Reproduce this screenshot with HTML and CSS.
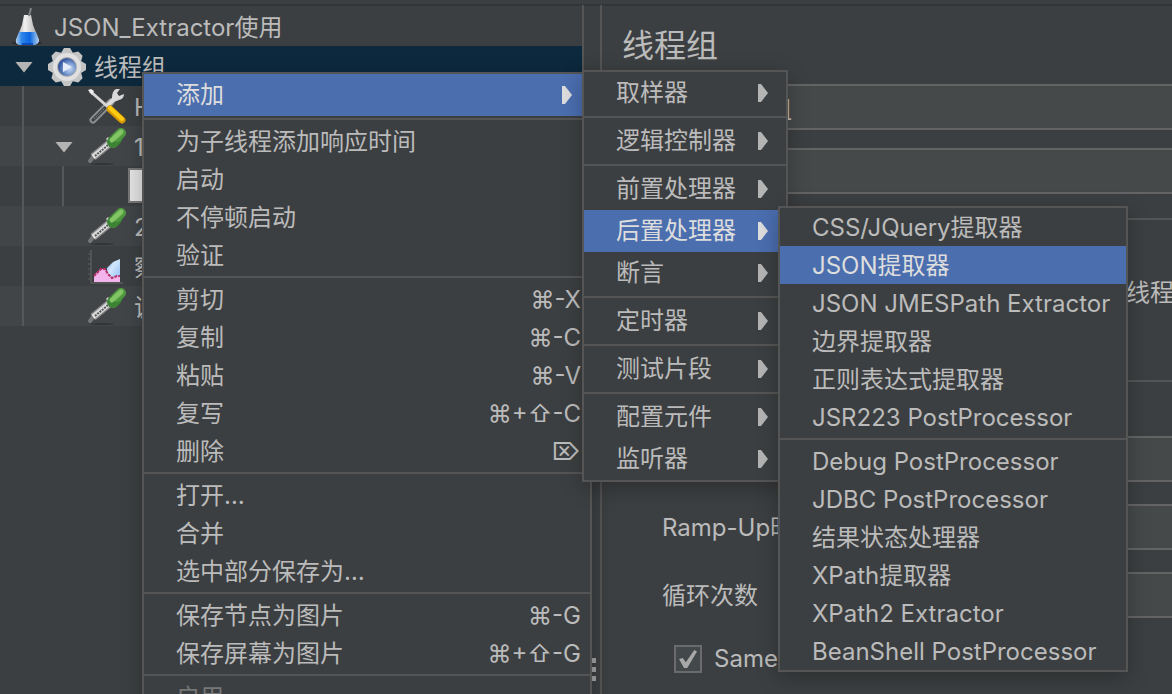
FILE: index.html
```html
<!DOCTYPE html>
<html lang="zh-CN">
<head>
  <meta charset="UTF-8">
  <title>JSON_Extractor使用</title>
  <link rel="stylesheet" href="styles.css">
</head>
<body>

  <svg class="defs" aria-hidden="true">
    <defs>
      <linearGradient id="glass" x1="0" x2="1">
        <stop offset="0" stop-color="#a4a4a4"/>
        <stop offset="0.4" stop-color="#f2f2f2"/>
        <stop offset="1" stop-color="#a0a0a0"/>
      </linearGradient>
      <linearGradient id="liquid" x1="0" x2="1">
        <stop offset="0" stop-color="#b4d2ee"/>
        <stop offset="0.25" stop-color="#2f86ea"/>
        <stop offset="0.6" stop-color="#0a66e0"/>
        <stop offset="1" stop-color="#b4d2ee"/>
      </linearGradient>
      <radialGradient id="hub" cx="0.65" cy="0.6" r="0.6">
        <stop offset="0" stop-color="#c4d6f0"/>
        <stop offset="0.5" stop-color="#7f9fd4"/>
        <stop offset="1" stop-color="#34569c"/>
      </radialGradient>
      <linearGradient id="peak" x1="0" y1="0" x2="1" y2="1">
        <stop offset="0" stop-color="#6fa6ea"/>
        <stop offset="0.4" stop-color="#d4e7fc"/>
        <stop offset="1" stop-color="#8fbdf5"/>
      </linearGradient>
      <symbol id="dropper" viewBox="0 0 40 40">
        <ellipse cx="15" cy="38" rx="12" ry="1" fill="#323537"/>
        <path d="M3 35 L6 31" stroke="#777" stroke-width="4" stroke-linecap="round"/>
        <path d="M6 31 L23 17" stroke="#8c8c8c" stroke-width="8"/>
        <path d="M6 31 L23 17" stroke="#dcdcdc" stroke-width="5"/>
        <path d="M8 30 L21 19" stroke="#55585a" stroke-width="2" stroke-dasharray="2 1"/>
        <path d="M20 12 L28 21" stroke="#c8c8c8" stroke-width="3"/>
        <path d="M26 16 L29 13" stroke="#3c8434" stroke-width="12" stroke-linecap="round"/>
        <path d="M30 11 L34 7" stroke="#4f9a40" stroke-width="10" stroke-linecap="round"/>
        <path d="M25 14 L34 6" stroke="#83c565" stroke-width="5" stroke-linecap="round"/>
      </symbol>
    </defs>
  </svg>

  <div class="app">
    <div class="tree">
      <div class="row">
        <svg class="icon" viewBox="0 0 40 40">
          <ellipse cx="20" cy="37" rx="15" ry="2" fill="#2a2c2e"/>
          <path d="M17 9 L24 9 L26 19 L32 34 Q32 38 27 39 L13 39 Q8 38 9 34 L15 19 Z" fill="url(#glass)"/>
          <path d="M12 26 L29 26 L32 34 Q32 38 27 39 L13 39 Q8 38 9 34 Z" fill="url(#liquid)"/>
          <path d="M15 38 H26" stroke="#0a4ec0" stroke-width="2"/>
          <path d="M22 10 L24 2" stroke="#808080" stroke-width="2"/>
        </svg>
        <span>JSON_Extractor使用</span>
      </div>
      <div class="row selected">
        <span class="toggle open"></span>
        <svg class="icon" viewBox="0 0 40 40">
          <g transform="translate(20 21)">
            <g fill="#c4c4c4">
              <path d="M-6 -14 L-3 -19 H3 L6 -14 V14 L3 19 H-3 L-6 14 Z"/>
              <path d="M-6 -14 L-3 -19 H3 L6 -14 V14 L3 19 H-3 L-6 14 Z" transform="rotate(45)"/>
              <path d="M-6 -14 L-3 -19 H3 L6 -14 V14 L3 19 H-3 L-6 14 Z" transform="rotate(90)"/>
              <path d="M-6 -14 L-3 -19 H3 L6 -14 V14 L3 19 H-3 L-6 14 Z" transform="rotate(135)"/>
            </g>
            <circle r="14" fill="#e0e0e0"/>
            <circle r="10" fill="#a9abb0"/>
            <circle r="9" fill="url(#hub)"/>
            <path d="M-4 -5 L5 0 L-4 5 Z" fill="#e6edf8"/>
          </g>
        </svg>
        <span>线程组</span>
      </div>
      <div class="row level-2">
        <span class="toggle"></span>
        <svg class="icon" viewBox="0 0 40 40">
          <path d="M6 34 L24 16" stroke="#8a8c8d" stroke-width="7" stroke-linecap="round"/>
          <path d="M6 34 L19 21" stroke="#3c3f41" stroke-width="3" stroke-linecap="round"/>
          <path d="M7 33 L18 22" stroke="#85878a" stroke-width="1" stroke-dasharray="2 1"/>
          <path d="M25 12 Q25 5 29 3 L33 3 L30 7 L32 10 L37 8 Q37 13 32 14 L27 16 Z" fill="#d8d8d8"/>
          <path d="M20 20 L28 12" stroke="#dcdcdc" stroke-width="4"/>
          <path d="M3 5 L21 21" stroke="#d6d6d6" stroke-width="3"/>
          <path d="M1 4 L4 3 L7 5 L5 9 Z" fill="#eee"/>
          <path d="M23 23 L35 34" stroke="#d89c00" stroke-width="7" stroke-linecap="round"/>
          <path d="M23 22 L35 33" stroke="#ffcc14" stroke-width="4" stroke-linecap="round"/>
        </svg>
        <span>HTTP信息头管理器</span>
      </div>
      <div class="row level-2 striped">
        <span class="toggle open"></span>
        <svg class="icon"><use href="#dropper"/></svg>
        <span>1.登录</span>
      </div>
      <div class="row level-3">
        <span class="toggle"></span>
        <svg class="icon" viewBox="0 0 40 40">
          <path d="M2 3 H34 V36 H2 Z" fill="#e4e4e4" stroke="#777" stroke-width="2"/>
        </svg>
      </div>
      <div class="row level-2 striped">
        <span class="toggle"></span>
        <svg class="icon"><use href="#dropper"/></svg>
        <span>2.查询</span>
      </div>
      <div class="row level-2">
        <span class="toggle"></span>
        <svg class="icon" viewBox="0 0 40 40">
          <path d="M4 4 V37 H36" fill="none" stroke="#66686a" stroke-width="1"/>
          <path d="M1 8 h3 M1 13 h3 M1 18 h3 M1 23 h3 M1 28 h3 M1 33 h3" stroke="#5a5c5e" stroke-width="1"/>
          <path d="M20 28 V22 L26 16 L33 13 V31 L26 33 Z" fill="url(#peak)"/>
          <path d="M7 36 V29 L14 23 H18 L21 28 L25 32 L30 30 L33 31 V36 Z" fill="#f2b4ea"/>
          <path d="M7 30 L14 23 H18 L21 28 L25 32 L30 30 L33 30" fill="none" stroke="#b8306c" stroke-width="2" stroke-dasharray="3 1"/>
        </svg>
        <span>察看结果树</span>
      </div>
      <div class="row level-2 striped">
        <span class="toggle"></span>
        <svg class="icon"><use href="#dropper"/></svg>
        <span>调试取样器</span>
      </div>
    </div>

    <div class="splitter"><i></i><i></i><i></i></div>

    <div class="editor">
      <h1>线程组</h1>
      <div class="line">
        <label for="name">名称：</label>
        <input type="text" id="name" value="线程组">
      </div>
      <div class="line">
        <label for="comment">注释：</label>
        <input type="text" id="comment">
      </div>

      <div class="group actions">
        <label><input type="radio" name="action" checked>继续</label>
        <label><input type="radio" name="action">启动下一进程循环</label>
        <label><input type="radio" name="action">线程</label>
      </div>

      <div class="group props">
        <div class="line">
          <label for="threads">线程数：</label>
          <input type="text" id="threads">
        </div>
        <div class="line">
          <label for="rampup">Ramp-Up时间（秒）：</label>
          <input type="text" id="rampup">
        </div>
        <div class="line">
          <label for="loops">循环次数</label>
          <input type="text" id="loops">
        </div>
        <label class="check"><input type="checkbox" checked>Same user on each iteration</label>
      </div>
    </div>
  </div>

  <div class="menu context-menu">
    <button class="has-sub active">添加</button>
    <hr>
    <button>为子线程添加响应时间</button>
    <button>启动</button>
    <button>不停顿启动</button>
    <button>验证</button>
    <hr>
    <button>剪切<kbd>⌘-X</kbd></button>
    <button>复制<kbd>⌘-C</kbd></button>
    <button>粘贴<kbd>⌘-V</kbd></button>
    <button>复写<kbd>⌘+⇧-C</kbd></button>
    <button>删除<kbd>⌦</kbd></button>
    <hr>
    <button>打开…</button>
    <button>合并</button>
    <button>选中部分保存为…</button>
    <hr>
    <button>保存节点为图片<kbd>⌘-G</kbd></button>
    <button>保存屏幕为图片<kbd>⌘+⇧-G</kbd></button>
    <hr>
    <button disabled>启用</button>
  </div>

  <div class="menu add-menu">
    <button class="has-sub">取样器</button>
    <hr>
    <button class="has-sub">逻辑控制器</button>
    <hr>
    <button class="has-sub">前置处理器</button>
    <button class="has-sub active">后置处理器</button>
    <button class="has-sub">断言</button>
    <hr>
    <button class="has-sub">定时器</button>
    <hr>
    <button class="has-sub">测试片段</button>
    <hr>
    <button class="has-sub">配置元件</button>
    <button class="has-sub">监听器</button>
  </div>

  <div class="menu post-menu">
    <button>CSS/JQuery提取器</button>
    <button class="active">JSON提取器</button>
    <button>JSON JMESPath Extractor</button>
    <button>边界提取器</button>
    <button>正则表达式提取器</button>
    <button>JSR223 PostProcessor</button>
    <hr>
    <button>Debug PostProcessor</button>
    <button>JDBC PostProcessor</button>
    <button>结果状态处理器</button>
    <button>XPath提取器</button>
    <button>XPath2 Extractor</button>
    <button>BeanShell PostProcessor</button>
  </div>

</body>
</html>
```
FILE: styles.css
```css
* {
  box-sizing: border-box;
}

body {
  margin: 0;
  height: 100vh;
  overflow: hidden;
  position: relative;
  background: #3c3f41;
  color: #bbbbbb;
  font-family: Inter, "Noto Sans CJK SC", sans-serif;
  font-size: 24px;
  line-height: 38px;
}

button,
input {
  font: inherit;
  color: inherit;
}

.defs {
  position: absolute;
  width: 0;
  height: 0;
}

.app {
  display: flex;
  height: 100%;
  padding-top: 4px;
}

.tree,
.splitter,
.editor {
  border-top: 2px solid #323537;
}

/* test plan tree */
.tree {
  width: 582px;
  flex: none;
}

.row {
  display: flex;
  align-items: center;
  height: 40px;
  padding-left: 7px;
  white-space: nowrap;
  background-repeat: no-repeat;
}

.row span:last-child {
  padding-top: 3px;
}

.row.selected {
  background-color: #0d293e;
}

.row.striped {
  background-color: #414547;
}

.level-2 {
  padding-left: 47px;
  background-image: linear-gradient(#555758, #555758);
  background-size: 2px 100%;
  background-position: 22px 0;
}

.level-3 {
  padding-left: 87px;
  background-image: linear-gradient(#555758, #555758), linear-gradient(#555758, #555758);
  background-size: 2px 100%;
  background-position: 22px 0, 62px 0;
}

.icon {
  width: 40px;
  height: 40px;
  margin-right: 7px;
  flex: none;
}

.toggle {
  width: 40px;
  padding: 2px 0 0 8px;
  flex: none;
}

.toggle.open::before {
  content: "";
  display: block;
  width: 18px;
  height: 11px;
  background: #b4b4b4;
  clip-path: polygon(0 0, 100% 0, 50% 100%);
}

.splitter {
  width: 20px;
  flex: none;
  display: flex;
  flex-direction: column;
  justify-content: flex-end;
  align-items: center;
  gap: 4px;
  padding-bottom: 13px;
  border-left: 2px solid #555555;
  border-right: 2px solid #555555;
}

.splitter i {
  width: 8px;
  height: 5px;
  background: #a0a0a0;
}

/* thread group panel */
.editor {
  flex: 1;
  min-width: 0;
  padding: 20px 0 0 20px;
}

h1 {
  margin: 0 0 18px;
  font-size: 32px;
  font-weight: normal;
  line-height: 40px;
}

.line {
  display: flex;
  align-items: center;
  margin-bottom: 18px;
  white-space: nowrap;
}

.line label {
  min-width: 88px;
}

.line input {
  flex: 1;
  min-width: 0;
  height: 46px;
  padding: 0 8px;
  background: #45494a;
  border: 2px solid #646464;
  border-right: none;
}

.group {
  border-top: 2px solid #555555;
}

.actions {
  display: flex;
  gap: 52px;
  height: 162px;
  margin-top: 24px;
  padding: 54px 0 0 40px;
  white-space: nowrap;
}

.actions label {
  display: flex;
  gap: 12px;
  height: 38px;
  align-items: center;
}

.actions input {
  width: 28px;
  height: 28px;
  margin: 0;
}

.props {
  padding: 54px 0 0 40px;
}

.props .line {
  margin-bottom: 22px;
}

.props .line label {
  min-width: 240px;
  padding-top: 2px;
}

.check {
  display: flex;
  align-items: center;
  gap: 12px;
  padding-left: 12px;
  white-space: nowrap;
}

.check input {
  appearance: none;
  width: 28px;
  height: 28px;
  margin: 0;
  border: 2px solid #6b6b6b;
  background: #43494a;
}

.check input:checked::before {
  content: "";
  display: block;
  width: 18px;
  height: 18px;
  margin: 3px;
  background: #a8a8a8;
  clip-path: polygon(0 50%, 20% 45%, 38% 68%, 85% 0, 100% 8%, 46% 100%, 28% 100%);
}

/* popup menus */
.menu {
  position: absolute;
  display: flex;
  flex-direction: column;
  background: #3c3f41;
  border: 2px solid #555555;
  box-shadow: 0 6px 20px rgba(0, 0, 0, 0.25);
}

.context-menu {
  left: 142px;
  top: 72px;
  width: 450px;
}

.add-menu {
  left: 582px;
  top: 70px;
  width: 206px;
}

.post-menu {
  left: 778px;
  top: 206px;
  width: 350px;
}

.menu button {
  display: flex;
  justify-content: space-between;
  align-items: center;
  height: 38px;
  padding: 2px 9px 0 32px;
  background: none;
  border: none;
  text-align: left;
  white-space: nowrap;
}

.menu button.has-sub {
  height: 42px;
  padding: 0 18px 0 32px;
}

.menu .has-sub::after {
  content: "";
  width: 10px;
  height: 18px;
  background: #b4b4b4;
  clip-path: polygon(0 0, 30% 0, 100% 50%, 30% 100%, 0 100%);
}

.menu button.active {
  background: #4b6eaf;
  color: #dddddd;
}

.menu .active::after {
  background: #dddddd;
}

.menu button:disabled {
  color: #777777;
}

.menu hr {
  width: 100%;
  height: 2px;
  margin: 2px 0;
  border: none;
  background: #555555;
}

kbd {
  font-family: inherit;
}
```
